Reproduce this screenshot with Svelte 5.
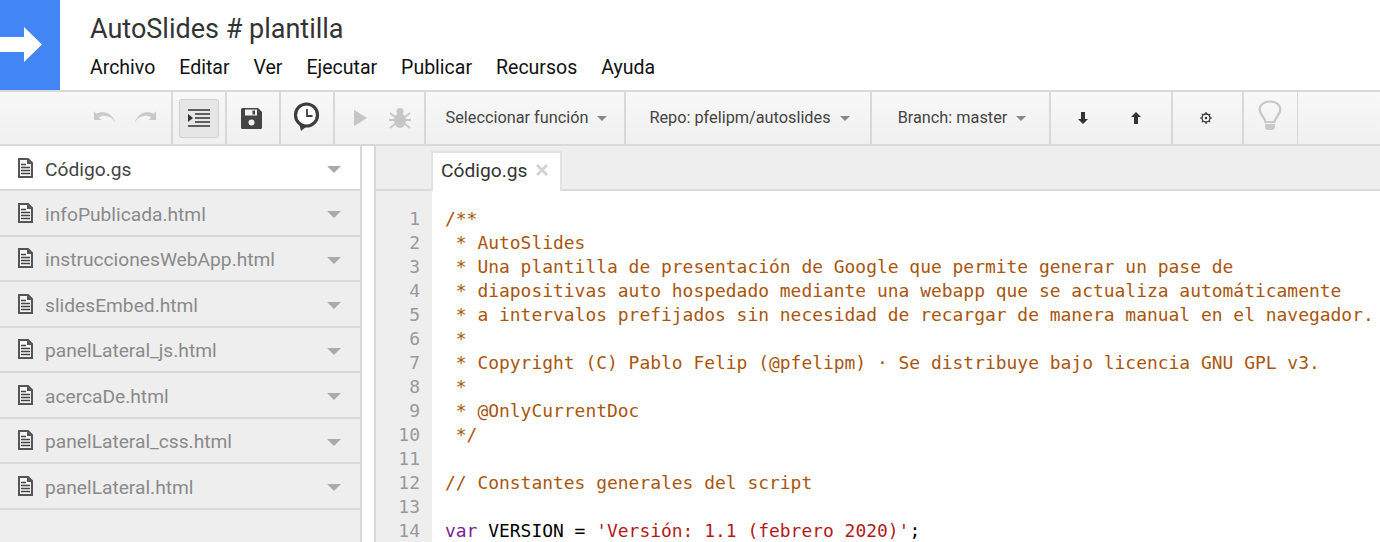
<script>
  const menus = ["Archivo", "Editar", "Ver", "Ejecutar", "Publicar", "Recursos", "Ayuda"];
  const files = [
    "Código.gs",
    "infoPublicada.html",
    "instruccionesWebApp.html",
    "slidesEmbed.html",
    "panelLateral_js.html",
    "acercaDe.html",
    "panelLateral_css.html",
    "panelLateral.html"
  ];
  // c = comment, k = keyword, s = string, plain otherwise
  const lines = [
    [["c", "/**"]],
    [["c", " * AutoSlides"]],
    [["c", " * Una plantilla de presentación de Google que permite generar un pase de"]],
    [["c", " * diapositivas auto hospedado mediante una webapp que se actualiza automáticamente"]],
    [["c", " * a intervalos prefijados sin necesidad de recargar de manera manual en el navegador."]],
    [["c", " *"]],
    [["c", " * Copyright (C) Pablo Felip (@pfelipm) · Se distribuye bajo licencia GNU GPL v3."]],
    [["c", " *"]],
    [["c", " * @OnlyCurrentDoc"]],
    [["c", " */"]],
    [],
    [["c", "// Constantes generales del script"]],
    [],
    [["k", "var"], ["", " VERSION = "], ["s", "'Versión: 1.1 (febrero 2020)'"], ["", ";"]]
  ];
</script>

{#snippet fileIcon()}
  <svg class="fileicon" width="15" height="20" viewBox="0 0 15 20">
    <path d="M1 1h9l4 4v14H1z" fill="#f6f6f6" stroke="#555" stroke-width="2" />
    <path d="M9 1v5h5z" fill="#555" />
    <path d="M3 6.500h5M3 9.500h9M3 12.500h9M3 15.500h9" stroke="#444" stroke-width="1.700" />
  </svg>
{/snippet}

<div class="page">
  <header class="top">
    <div class="logo">
      <svg width="42" height="35" viewBox="0 0 42 35">
        <path d="M0 10h24V0l18 17.500-18 17.500V25H0z" fill="#fff" />
      </svg>
    </div>
    <div class="titles">
      <div class="title">AutoSlides # plantilla</div>
      <nav class="menu">
        {#each menus as m}<span>{m}</span>{/each}
      </nav>
    </div>
  </header>

  <div class="toolbar">
    <div class="grp g-undo">
      <svg width="24" height="14" viewBox="0 0 25 14"><path d="M1 1v9h8L6 7.400C9 5 15 4.600 20 8.500l3.500 4.500C21 5 13-1 3.800 3.600z" fill="#c9c9c9" /></svg>
      <svg width="24" height="14" viewBox="0 0 25 14"><path d="M24 1v9h-8l3-2.600C16 5 10 4.600 5 8.500L1.500 13C4 5 12-1 21.200 3.600z" fill="#c9c9c9" /></svg>
    </div>
    <div class="grp g-icon">
      <div class="pressed">
        <svg width="22" height="18" viewBox="0 0 22 18">
          <path d="M0 1h22M7 5h15M7 9h15M7 13h15M0 17h22" stroke="#333" stroke-width="1.600" />
          <path d="M0 5l5 4-5 4z" fill="#333" />
        </svg>
      </div>
    </div>
    <div class="grp g-icon g-save">
      <svg width="21" height="21" viewBox="0 0 21 21">
        <path d="M0 1.500A1.500 1.500 0 0 1 1.500 0H17l4 4v15.500a1.500 1.500 0 0 1-1.500 1.500h-18A1.500 1.500 0 0 1 0 19.500z" fill="#444" />
        <rect x="4" y="1.500" width="12" height="6" fill="#f2f2f2" />
        <rect x="11.500" y="2.500" width="2.500" height="4" fill="#444" />
        <circle cx="10.500" cy="14.500" r="3" fill="#f2f2f2" />
      </svg>
    </div>
    <div class="grp g-icon g-clock">
      <svg width="27" height="30" viewBox="0 0 27 30">
        <circle cx="13.500" cy="13" r="11" fill="#fff" stroke="#3d3d3d" stroke-width="3.200" />
        <path d="M6 21l2 8 6-5z" fill="#3d3d3d" />
        <path d="M14 7v7h5.500" fill="none" stroke="#3d3d3d" stroke-width="1.800" />
      </svg>
    </div>
    <div class="grp g-run">
      <svg width="13" height="18" viewBox="0 0 14 18"><path d="M0 0l14 9L0 18z" fill="#c6c6c6" /></svg>
      <svg width="24" height="24" viewBox="0 0 24 24">
        <ellipse cx="12" cy="14.500" rx="6" ry="7.500" fill="#c6c6c6" />
        <circle cx="12" cy="5.500" r="3.500" fill="#c6c6c6" />
        <path d="M2 7l5 4M22 7l-5 4M1 14h6M23 14h-6M2 22l5-4M22 22l-5-4" stroke="#c6c6c6" stroke-width="1.800" />
      </svg>
    </div>
    <div class="grp g-drop w-fn"><span>Seleccionar función</span><i class="caret"></i></div>
    <div class="grp g-drop w-repo"><span>Repo: pfelipm/autoslides</span><i class="caret"></i></div>
    <div class="grp g-drop w-branch"><span>Branch: master</span><i class="caret"></i></div>
    <div class="grp g-arrows">
      <span class="glyph">
        <svg width="10" height="12" viewBox="0 0 10 12"><path d="M3 0h4v7h3l-5 5-5-5h3z" fill="#333" /></svg>
      </span>
      <span class="glyph">
        <svg width="10" height="12" viewBox="0 0 10 12"><path d="M3 12h4V5h3L5 0 0 5h3z" fill="#333" /></svg>
      </span>
    </div>
    <div class="grp g-gear">
      <svg width="12" height="12" viewBox="0 0 12 12">
        <circle cx="6" cy="6" r="4" fill="none" stroke="#333" stroke-width="1.300" />
        <circle cx="6" cy="6" r="1.200" fill="#333" />
        <path d="M6 0v2M6 10v2M0 6h2M10 6h2M1.800 1.800l1.400 1.400M8.800 8.800l1.400 1.400M1.800 10.200l1.400-1.400M8.800 3.200l1.400-1.400" stroke="#333" stroke-width="1.200" />
      </svg>
    </div>
    <div class="grp g-bulb">
      <svg width="24" height="32" viewBox="0 0 24 32">
        <path d="M7.500 22c0-4-5.800-7-5.800-12.500C1.700 4.500 6.200 1.500 12 1.500s10.300 3 10.300 8C22.300 15 16.500 18 16.500 22z" fill="none" stroke="#c8c8c8" stroke-width="2.200" />
        <path d="M7 24h10v4l-2 2H9l-2-2z" fill="#c8c8c8" />
      </svg>
    </div>
  </div>

  <div class="body">
    <aside class="sidebar">
      {#each files as f, i}
        <div class="file" class:active={i === 0}>
          {@render fileIcon()}
          <span class="fname">{f}</span>
          <i class="caret side"></i>
        </div>
      {/each}
    </aside>
    <div class="gap"></div>
    <main class="editor">
      <div class="tabs">
        <div class="tab">
          <span>Código.gs</span>
          <svg width="14" height="14" viewBox="0 0 14 14"><path d="M2 2l10 10M12 2L2 12" stroke="#d4d4d4" stroke-width="3" /></svg>
        </div>
      </div>
      <div class="code">
        <div class="gutter">
          {#each lines as _, i}<div>{i + 1}</div>{/each}
        </div>
        <div class="src">
          {#each lines as parts}
            <div class="ln">{#each parts as [t, s]}<span class={t}>{s}</span>{/each}</div>
          {/each}
        </div>
      </div>
    </main>
  </div>
</div>

<style>
  :global(body) {
    margin: 0;
    background: #fff;
    overflow: hidden;
  }
  .page {
    width: 1380px;
    height: 542px;
    overflow: hidden;
    font-family: Roboto, "Liberation Sans", sans-serif;
    display: flex;
    flex-direction: column;
  }
  .top {
    height: 90px;
    display: flex;
    flex: none;
  }
  .logo {
    width: 60px;
    background: #4285f4;
    display: flex;
    align-items: center;
    justify-content: flex-end;
    padding: 0 18px 1px 0;
    box-sizing: border-box;
  }
  .titles {
    padding-left: 30px;
  }
  .title {
    font-size: 27px;
    color: #333;
    line-height: 30px;
    margin-top: 14px;
  }
  .menu {
    display: flex;
    gap: 24px;
    margin-top: 9px;
    font-size: 19.500px;
    line-height: 30px;
    color: #111;
  }
  .toolbar {
    height: 52px;
    flex: none;
    display: flex;
    border-top: 2px solid #d9d9d9;
    border-bottom: 2px solid #d9d9d9;
    background: linear-gradient(#f8f8f8, #f0f0f0);
  }
  .grp {
    display: flex;
    align-items: center;
    justify-content: center;
    box-sizing: border-box;
    border-right: 2px solid #d8d8d8;
    height: 52px;
    flex: none;
  }
  .g-undo {
    width: 173px;
    justify-content: flex-end;
    gap: 16px;
    padding: 0 14px 2px 0;
  }
  .g-icon {
    width: 54px;
  }
  .g-save {
    padding-right: 3px;
  }
  .g-clock {
    padding-right: 1px;
    padding-bottom: 2px;
  }
  .pressed {
    width: 40px;
    height: 39px;
    background: #e6e6e6;
    border: 1.500px solid #d0d0d0;
    border-radius: 3px;
    box-sizing: border-box;
    display: flex;
    align-items: center;
    justify-content: center;
  }
  .g-run {
    width: 91px;
    gap: 21px;
    padding-left: 6px;
  }
  .g-drop {
    font-size: 16.300px;
    color: #444;
    gap: 9px;
    padding: 0 0 1px 3px;
  }
  .w-fn {
    width: 200px;
  }
  .w-repo {
    width: 246px;
  }
  .w-branch {
    width: 179px;
  }
  .g-arrows {
    width: 122px;
    gap: 43px;
    padding-right: 4px;
  }
  .glyph {
    display: flex;
    width: 10px;
  }
  .g-gear {
    width: 71px;
    padding-right: 3px;
  }
  .g-bulb {
    width: 54px;
    border-right-width: 1px;
    padding: 0 2px 4px 0;
  }
  .caret {
    display: block;
    width: 0;
    height: 0;
    border-left: 5px solid transparent;
    border-right: 5px solid transparent;
    border-top: 5px solid #888;
    margin-top: 2px;
  }
  .body {
    flex: 1;
    display: flex;
    min-height: 0;
  }
  .sidebar {
    width: 362px;
    flex: none;
    box-sizing: border-box;
    background: #eeeeee;
    border-right: 2px solid #d9d9d9;
  }
  .file {
    height: 45.500px;
    box-sizing: border-box;
    display: flex;
    align-items: center;
    padding: 0 19px 0 18px;
    border-bottom: 2px solid #d9d9d9;
    color: #8a8a8a;
    font-size: 19.200px;
  }
  .file.active {
    background: #fff;
    color: #444;
    height: 45px;
  }
  .fname {
    margin-left: 12px;
    flex: 1;
    padding-top: 3px;
  }
  .fileicon {
    flex: none;
  }
  .caret.side {
    border-left-width: 7px;
    border-right-width: 7px;
    border-top: 7px solid #aaa;
    margin-top: 4px;
  }
  .gap {
    width: 12px;
    flex: none;
  }
  .editor {
    flex: 1;
    display: flex;
    flex-direction: column;
    min-width: 0;
  }
  .tabs {
    height: 45px;
    flex: none;
    box-sizing: border-box;
    background: #eeeeee;
    border-left: 2px solid #d9d9d9;
    border-bottom: 2px solid #d9d9d9;
    padding: 5px 0 0 55px;
  }
  .tab {
    width: 131px;
    height: 40px;
    box-sizing: border-box;
    background: #fff;
    border: 2px solid #e2e2e2;
    border-bottom: 0;
    display: flex;
    align-items: center;
    padding: 0 0 4px 8px;
    gap: 8px;
    font-size: 19.200px;
    color: #333;
  }
  .code {
    flex: 1;
    display: flex;
    min-height: 0;
    font-family: "DejaVu Sans Mono", "Liberation Mono", monospace;
    font-size: 18px;
    line-height: 24px;
  }
  .gutter {
    width: 58px;
    flex: none;
    box-sizing: border-box;
    background: #eeeeee;
    border-left: 2px solid #d9d9d9;
    padding: 16px 12px 0 0;
    text-align: right;
    color: #999;
    font-size: 18px;
  }
  .src {
    padding: 16px 0 0 13px;
    white-space: pre;
    color: #000;
    font-size: 17.950px;
  }
  .ln {
    height: 24px;
  }
  .c {
    color: #a8560f;
  }
  .k {
    color: #7a1f8b;
  }
  .s {
    color: #b11a1a;
  }
</style>
